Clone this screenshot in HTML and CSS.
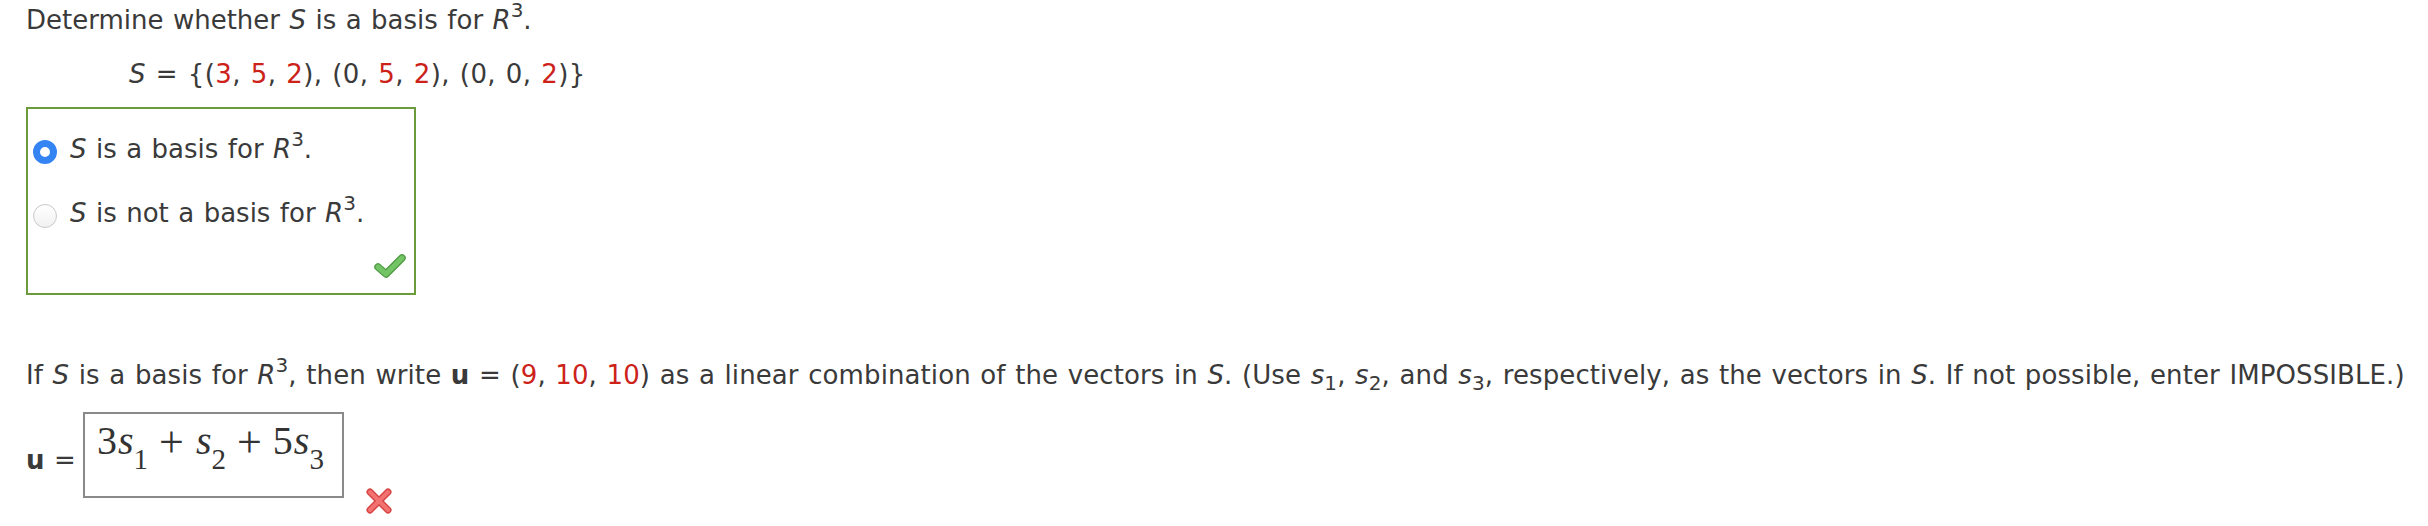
FILE: index.html
```html
<!DOCTYPE html>
<html>
<head>
<meta charset="utf-8">
<link rel="stylesheet" href="styles.css">
</head>
<body>
<div class="q">
  <p class="line">Determine whether <i>S</i> is a basis for <i>R</i><sup>3</sup>.</p>
  <p class="line set"><i>S</i> = {(<span class="red">3</span>, <span class="red">5</span>, <span class="red">2</span>), (0, <span class="red">5</span>, <span class="red">2</span>), (0, 0, <span class="red">2</span>)}</p>
  <div class="choices">
    <div class="opt"><span class="radio on"></span><span class="line"><i>S</i> is a basis for <i>R</i><sup>3</sup>.</span></div>
    <div class="opt second"><span class="radio"></span><span class="line"><i>S</i> is not a basis for <i>R</i><sup>3</sup>.</span></div>
    <div class="markrow">
      <svg class="check" width="32" height="26" viewBox="0 0 32 26">
        <path d="M4 14 L12 21 L28 5" fill="none" stroke="#4f9a45" stroke-width="7.5" stroke-linecap="round" stroke-linejoin="round"/>
        <path d="M4 14 L12 21 L28 5" fill="none" stroke="#72c464" stroke-width="5" stroke-linecap="round" stroke-linejoin="round"/>
      </svg>
    </div>
  </div>
  <p class="line para">If <i>S</i> is a basis for <i>R</i><sup>3</sup>, then write <b>u</b> = (<span class="red">9</span>, <span class="red">10</span>, <span class="red">10</span>) as a linear combination of the vectors in <i>S</i>. (Use <i>s</i><sub>1</sub>, <i>s</i><sub>2</sub>, and <i>s</i><sub>3</sub>, respectively, as the vectors in <i>S</i>. If not possible, enter IMPOSSIBLE.)</p>
  <div class="answer">
    <span class="line ulabel"><b>u</b> =</span>
    <div class="mathbox"><span class="math">3<i>s</i><sub>1</sub><span class="op">+</span><i>s</i><sub>2</sub><span class="op">+</span>5<i>s</i><sub>3</sub></span></div>
    <svg class="cross" width="28" height="26" viewBox="0 0 28 26">
      <path d="M5 4 L23 22 M23 4 L5 22" fill="none" stroke="#d84545" stroke-width="7" stroke-linecap="round"/>
      <path d="M5 4 L23 22 M23 4 L5 22" fill="none" stroke="#f27272" stroke-width="4" stroke-linecap="round"/>
    </svg>
  </div>
</div>
</body>
</html>
```
FILE: styles.css
```css
html, body {
  margin: 0;
  padding: 0;
  background: #ffffff;
}
.q {
  padding: 2px 0 0 26px;
  color: #3a3a3a;
  font-family: "DejaVu Sans", Verdana, sans-serif;
  font-size: 26px;
  word-spacing: 1.2px;
}
.line {
  line-height: 36px;
  margin: 0;
  white-space: nowrap;
}
sup {
  font-size: 20px;
  line-height: 0;
  position: relative;
  top: -2px;
}
.line sub {
  font-size: 20px;
  line-height: 0;
}
.red { color: #cc2219; }
.set {
  margin-top: 18px;
  padding-left: 103px;
  letter-spacing: 0.4px;
}
.choices {
  margin-top: 15px;
  width: 386px;
  border: 2px solid #6b9b3a;
  padding: 22px 0 14px 0;
  box-sizing: content-box;
  display: flex;
  flex-direction: column;
}
.opt {
  display: flex;
  align-items: flex-start;
  padding-left: 5px;
  gap: 13px;
}
.opt.second { margin-top: 28px; }
.radio {
  width: 24px;
  height: 24px;
  border-radius: 50%;
  box-sizing: border-box;
  border: 1px solid #c9c9c9;
  background: linear-gradient(#ffffff, #f1f1f1);
  flex: none;
  margin-top: 9px;
}
.radio.on {
  border: 7px solid #3584f4;
  background: #ffffff;
}
.markrow {
  display: flex;
  justify-content: flex-end;
  padding-right: 8px;
  margin-top: 22px;
}
.para {
  margin-top: 62px;
  letter-spacing: 0.1px;
}
.answer {
  display: flex;
  align-items: flex-start;
  margin-top: 19px;
}
.ulabel {
  margin-top: 30px;
  width: 57px;
  flex: none;
}
.mathbox {
  border: 2px solid #8a8a8a;
  width: 245px;
  height: 82px;
  box-sizing: content-box;
  padding-left: 12px;
  display: flex;
  align-items: flex-start;
  overflow: hidden;
}
.math {
  font-family: "Liberation Serif", "Times New Roman", serif;
  font-size: 40px;
  line-height: 44px;
  margin-top: 5px;
  color: #333;
  white-space: nowrap;
  word-spacing: 0;
}
.math i { font-style: italic; padding-left: 1px; }
.math sub {
  font-size: 29px;
  line-height: 0;
  vertical-align: -15px;
}
.op {
  padding: 0 11px;
  font-size: 44px;
  line-height: 0;
  vertical-align: -3px;
}
.cross {
  margin-top: 76px;
  margin-left: 21px;
  flex: none;
}
```
